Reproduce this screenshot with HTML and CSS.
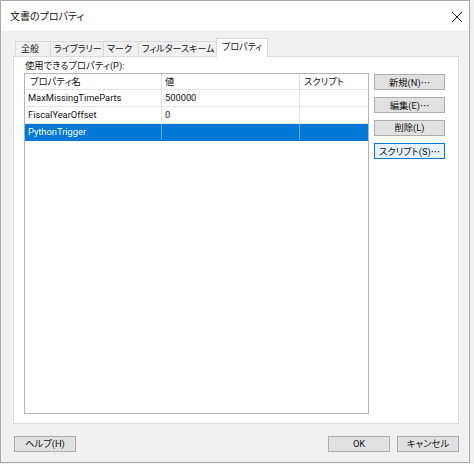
FILE: index.html
```html
<!DOCTYPE html>
<html lang="ja">
<head>
<meta charset="utf-8">
<link rel="stylesheet" href="styles.css">
</head>
<body>
<div class="window">
  <div class="titlebar">
    <span class="title">文書のプロパティ</span>
    <svg class="close" width="12" height="12" viewBox="0 0 12 12"><path d="M1 1 L11 11 M11 1 L1 11" stroke="#222" stroke-width="1" fill="none"/></svg>
  </div>
  <div class="content">
    <div class="tabs">
      <div class="tab w1">全般</div>
      <div class="tab w2">ライブラリー</div>
      <div class="tab w3">マーク</div>
      <div class="tab w4">フィルタースキーム</div>
      <div class="tab sel">プロパティ</div>
    </div>
    <div class="panel">
      <div class="label">使用できるプロパティ(P):</div>
      <div class="panel-body">
        <div class="list">
          <div class="row head">
            <div class="c1">プロパティ名</div>
            <div class="c2">値</div>
            <div class="c3">スクリプト</div>
          </div>
          <div class="row">
            <div class="c1">MaxMissingTimeParts</div>
            <div class="c2">500000</div>
            <div class="c3"></div>
          </div>
          <div class="row">
            <div class="c1">FiscalYearOffset</div>
            <div class="c2">0</div>
            <div class="c3"></div>
          </div>
          <div class="row selected">
            <div class="c1">PythonTrigger</div>
            <div class="c2"></div>
            <div class="c3"></div>
          </div>
        </div>
        <div class="side">
          <div class="btn">新規(N)<span class="ell">…</span></div>
          <div class="btn">編集(E)<span class="ell">…</span></div>
          <div class="btn">削除(L)</div>
          <div class="btn focus">スクリプト(S)<span class="ell">…</span></div>
        </div>
      </div>
    </div>
    <div class="footer">
      <div class="btn wide">ヘルプ(H)</div>
      <div class="right">
        <div class="btn wide">OK</div>
        <div class="btn wide">キャンセル</div>
      </div>
    </div>
  </div>
</div>
</body>
</html>
```
FILE: styles.css
```css
html, body {
  margin: 0;
  padding: 0;
  background: #f0f0f0;
}
body {
  font-family: Roboto, "Noto Sans CJK JP", sans-serif;
  font-feature-settings: "palt" 1;
  font-size: 9.3px;
  color: #111;
  width: 474px;
  height: 464px;
  overflow: hidden;
}
.window {
  width: 470px;
  height: 463px;
  box-sizing: border-box;
  border: 1px solid #a8a8a8;
  display: flex;
  flex-direction: column;
  background: #f0f0f0;
}
.titlebar {
  height: 30px;
  background: #fff;
  display: flex;
  align-items: center;
  justify-content: space-between;
  padding: 0 5px 0 9px;
  flex: none;
}
.title {
  font-size: 10px;
  line-height: 14px;
  margin-top: 2px;
}
.close {
  margin-right: 1px;
  margin-top: 2px;
}
.content {
  flex: 1;
  padding: 7px 10px 0 12px;
  display: flex;
  flex-direction: column;
}
.tabs {
  display: flex;
  height: 18px;
  padding-left: 2px;
  align-items: flex-end;
  position: relative;
  z-index: 1;
}
.tab {
  height: 15px;
  box-sizing: border-box;
  border: 1px solid #d9d9d9;
  border-bottom: none;
  border-right: none;
  background: #f0f0f0;
  line-height: 15px;
  padding-left: 4px;
  white-space: nowrap;
  font-size: 9px;
}
.w1 { width: 35px; padding-left: 5px; }
.w2 { width: 53px; padding-left: 3px; }
.w3 { width: 35px; padding-left: 3px; }
.w4 { width: 79px; padding-left: 3px; border-right: 1px solid #d9d9d9; }
.tab.sel {
  width: 52px;
  height: 19px;
  margin-bottom: -1px;
  margin-left: -1px;
  background: #fff;
  border-right: 1px solid #d9d9d9;
  line-height: 16px;
  padding-left: 5px;
}
.panel {
  height: 368px;
  box-sizing: border-box;
  background: #fff;
  border: 1px solid #d9d9d9;
  padding: 2px 0 0 10px;
  display: flex;
  flex-direction: column;
}
.label {
  height: 14px;
  line-height: 14px;
  padding-left: 1px;
}
.panel-body {
  display: flex;
}
.list {
  width: 345px;
  height: 341px;
  box-sizing: border-box;
  border: 1px solid #b4b4b4;
  background: #fff;
}
.row {
  display: flex;
  height: 17px;
  box-sizing: border-box;
  border-bottom: 1px solid #e3e3e3;
  line-height: 16px;
}
.row.head {
  height: 16px;
}
.row > div {
  box-sizing: border-box;
  padding-left: 3px;
  white-space: nowrap;
  overflow: hidden;
}
.c1 { width: 137px; border-right: 1px solid #e3e3e3; }
.c2 { width: 138px; border-right: 1px solid #e3e3e3; }
.c3 { width: 68px; }
.head .c1 { padding-left: 5px; }
.head .c3 { padding-left: 4px; }
.row.selected {
  background: #0078d7;
  color: #fff;
  border-bottom-color: #0078d7;
}
.row.selected .c1, .row.selected .c2 {
  border-right-color: #6aa8e0;
}
.side {
  display: flex;
  flex-direction: column;
  gap: 7px;
  margin-left: 5px;
  padding-top: 1px;
}
.btn {
  width: 71px;
  height: 16px;
  box-sizing: border-box;
  background: #e1e1e1;
  border: 1px solid #adadad;
  text-align: center;
  line-height: 14px;
  white-space: nowrap;
}
.ell {
  font-family: "Noto Sans CJK JP", sans-serif;
  font-feature-settings: normal;
}
.btn.focus {
  background: #e5f1fb;
  border-color: #0078d7;
}
.footer {
  display: flex;
  justify-content: space-between;
  margin-top: 12px;
  padding-left: 1px;
}
.footer .right {
  display: flex;
  gap: 7px;
}
.btn.wide {
  width: 62px;
}
```
